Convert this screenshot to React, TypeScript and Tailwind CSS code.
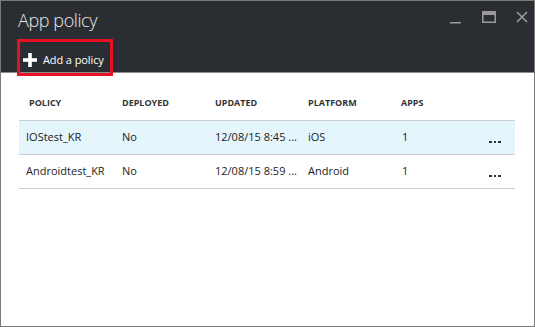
import React from "react";

const rows = [
  { policy: "IOStest_KR", deployed: "No", updated: "12/08/15 8:45 ...", platform: "iOS", apps: "1", selected: true },
  { policy: "Androidtest_KR", deployed: "No", updated: "12/08/15 8:59 ...", platform: "Android", apps: "1", selected: false },
];

export default function App() {
  return (
    <div
      className="relative w-[535px] h-[327px] bg-white border border-[#7a7a7a] flex flex-col overflow-hidden"
      style={{ fontFamily: '"Open Sans", "Noto Sans", sans-serif' }}
    >
      <div className="h-[72px] bg-[#2a2e33] border-b border-[#8c8c8c] flex flex-col shrink-0">
        <div className="flex items-start justify-between pl-[17px] pr-[5px] pt-[6px]">
          <div className="text-[18px] leading-[26px] text-[#e8e8e8] font-light tracking-[-0.4px]">App policy</div>
          <div className="flex items-center gap-[20px] pt-[3px] pr-[1px]">
            <svg width="12" height="12" viewBox="0 0 12 12" className="mt-[2px]">
              <rect x="0" y="10" width="11" height="1.5" fill="#9a9a9a" />
            </svg>
            <svg width="14" height="12" viewBox="0 0 14 12">
              <rect x="0.75" y="0.75" width="12.5" height="10.5" fill="none" stroke="#9a9a9a" strokeWidth="1.5" />
              <rect x="1" y="1" width="12" height="3" fill="#9a9a9a" />
            </svg>
            <svg width="12" height="12" viewBox="0 0 12 12">
              <path d="M1 1 L11 11 M11 1 L1 11" stroke="#9a9a9a" strokeWidth="1.6" fill="none" />
            </svg>
          </div>
        </div>
        <div className="flex items-center pl-[22px] mt-[20px] gap-[6px]">
          <svg width="14" height="14" viewBox="0 0 14 14">
            <rect x="5.2" y="0" width="3.6" height="14" fill="#ffffff" />
            <rect x="0" y="5.2" width="14" height="3.6" fill="#ffffff" />
          </svg>
          <span className="text-[11px] leading-[14px] text-white tracking-[-0.1px]">Add a policy</span>
        </div>
      </div>

      <div className="absolute left-[16px] top-[38px] w-[96px] h-[37px] border-[3px] border-[#e81123]" />

      <div className="pl-[18px] pr-[19px] pt-[17px]">
        <div className="flex items-center h-[31px] border-b border-[#cfcfcf] text-[9px] font-bold text-[#333] pl-[10px] pb-[4px]">
          <div className="w-[93px]">POLICY</div>
          <div className="w-[93px]">DEPLOYED</div>
          <div className="w-[93px]">UPDATED</div>
          <div className="w-[93px]">PLATFORM</div>
          <div className="w-[93px]">APPS</div>
        </div>
        {rows.map((r) => (
          <div
            key={r.policy}
            className={`flex items-center h-[34px] border-b border-[#cfcfcf] text-[11px] text-[#222] pl-[7px] ${r.selected ? "bg-[#e5f5fc]" : "bg-white"}`}
          >
            <div className="w-[96px] whitespace-nowrap">{r.policy}</div>
            <div className="w-[93px]">{r.deployed}</div>
            <div className="w-[93px] whitespace-nowrap">{r.updated}</div>
            <div className="w-[93px]">{r.platform}</div>
            <div className="w-[88px] pl-[1px]">{r.apps}</div>
            <div className="flex gap-[2px] mt-[9px]">
              <span className="w-[2.5px] h-[2.5px] bg-[#333]" />
              <span className="w-[2.5px] h-[2.5px] bg-[#333]" />
              <span className="w-[2.5px] h-[2.5px] bg-[#333]" />
            </div>
          </div>
        ))}
      </div>
    </div>
  );
}
